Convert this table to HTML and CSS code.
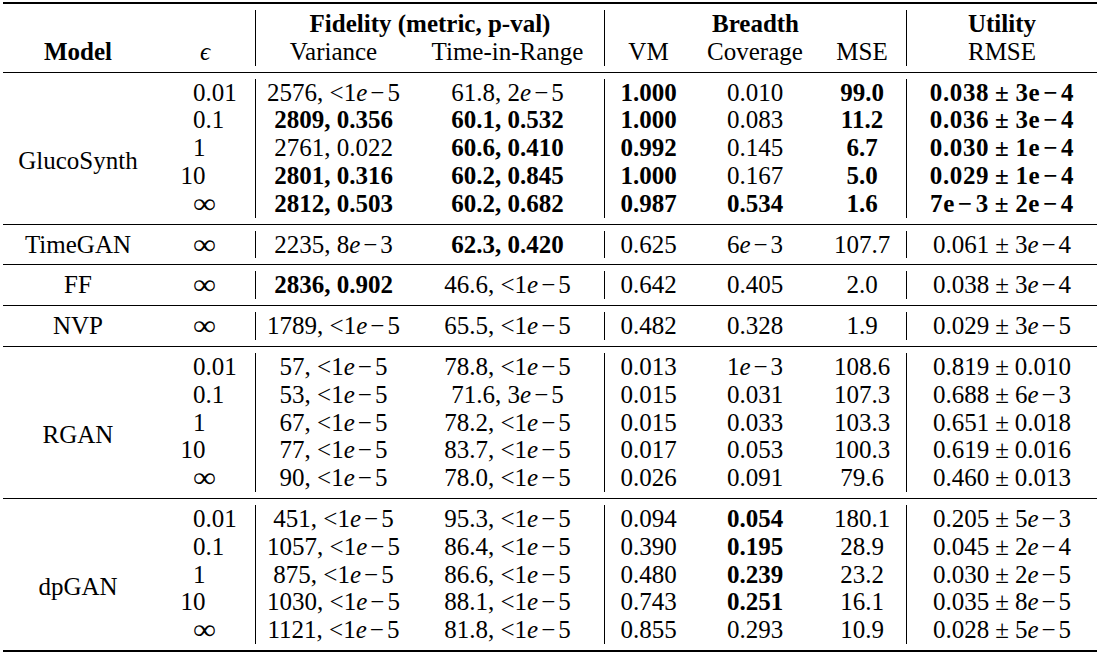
FILE: index.html
```html
<!DOCTYPE html>
<html>
<head>
<meta charset="utf-8">
<link rel="stylesheet" href="styles.css">
</head>
<body>
<div class="table">
  <div class="grp head">
    <div></div><div></div>
    <div class="c vl b span2">Fidelity (metric, p-val)</div>
    <div class="c vl b span3">Breadth</div>
    <div class="c vl b">Utility</div>
    <div class="c b">Model</div>
    <div class="eps-h"><span class="mi">ϵ</span></div>
    <div class="c vl">Variance</div>
    <div class="c">Time-in-Range</div>
    <div class="c vl">VM</div>
    <div class="c">Coverage</div>
    <div class="c">MSE</div>
    <div class="c vl">RMSE</div>
  </div>

  <div class="grp">
    <div class="c label">GlucoSynth</div>
    <div class="eps">0.01</div><div class="c vl">2576, &lt;1<span class="mi">e</span><span class="bin">−</span>5</div><div class="c">61.8, 2<span class="mi">e</span><span class="bin">−</span>5</div><div class="c vl b">1.000</div><div class="c">0.010</div><div class="c b">99.0</div><div class="c vl b mb">0.038<span class="pm">±</span>3e<span class="bin">−</span>4</div>
    <div class="eps">0.1</div><div class="c vl b">2809, 0.356</div><div class="c b">60.1, 0.532</div><div class="c vl b">1.000</div><div class="c">0.083</div><div class="c b">11.2</div><div class="c vl b mb">0.036<span class="pm">±</span>3e<span class="bin">−</span>4</div>
    <div class="eps">1</div><div class="c vl">2761, 0.022</div><div class="c b">60.6, 0.410</div><div class="c vl b">0.992</div><div class="c">0.145</div><div class="c b">6.7</div><div class="c vl b mb">0.030<span class="pm">±</span>1e<span class="bin">−</span>4</div>
    <div class="eps"><span class="out">10</span></div><div class="c vl b">2801, 0.316</div><div class="c b">60.2, 0.845</div><div class="c vl b">1.000</div><div class="c">0.167</div><div class="c b">5.0</div><div class="c vl b mb">0.029<span class="pm">±</span>1e<span class="bin">−</span>4</div>
    <div class="eps"><span class="inf">∞</span></div><div class="c vl b">2812, 0.503</div><div class="c b">60.2, 0.682</div><div class="c vl b">0.987</div><div class="c b">0.534</div><div class="c b">1.6</div><div class="c vl b mb">7e<span class="bin">−</span>3<span class="pm">±</span>2e<span class="bin">−</span>4</div>
  </div>

  <div class="grp">
    <div class="c">TimeGAN</div>
    <div class="eps"><span class="inf">∞</span></div><div class="c vl">2235, 8<span class="mi">e</span><span class="bin">−</span>3</div><div class="c b">62.3, 0.420</div><div class="c vl">0.625</div><div class="c">6<span class="mi">e</span><span class="bin">−</span>3</div><div class="c">107.7</div><div class="c vl">0.061<span class="pm">±</span>3<span class="mi">e</span><span class="bin">−</span>4</div>
  </div>

  <div class="grp">
    <div class="c">FF</div>
    <div class="eps"><span class="inf">∞</span></div><div class="c vl b">2836, 0.902</div><div class="c">46.6, &lt;1<span class="mi">e</span><span class="bin">−</span>5</div><div class="c vl">0.642</div><div class="c">0.405</div><div class="c">2.0</div><div class="c vl">0.038<span class="pm">±</span>3<span class="mi">e</span><span class="bin">−</span>4</div>
  </div>

  <div class="grp">
    <div class="c">NVP</div>
    <div class="eps"><span class="inf">∞</span></div><div class="c vl">1789, &lt;1<span class="mi">e</span><span class="bin">−</span>5</div><div class="c">65.5, &lt;1<span class="mi">e</span><span class="bin">−</span>5</div><div class="c vl">0.482</div><div class="c">0.328</div><div class="c">1.9</div><div class="c vl">0.029<span class="pm">±</span>3<span class="mi">e</span><span class="bin">−</span>5</div>
  </div>

  <div class="grp">
    <div class="c label">RGAN</div>
    <div class="eps">0.01</div><div class="c vl">57, &lt;1<span class="mi">e</span><span class="bin">−</span>5</div><div class="c">78.8, &lt;1<span class="mi">e</span><span class="bin">−</span>5</div><div class="c vl">0.013</div><div class="c">1<span class="mi">e</span><span class="bin">−</span>3</div><div class="c">108.6</div><div class="c vl">0.819<span class="pm">±</span>0.010</div>
    <div class="eps">0.1</div><div class="c vl">53, &lt;1<span class="mi">e</span><span class="bin">−</span>5</div><div class="c">71.6, 3<span class="mi">e</span><span class="bin">−</span>5</div><div class="c vl">0.015</div><div class="c">0.031</div><div class="c">107.3</div><div class="c vl">0.688<span class="pm">±</span>6<span class="mi">e</span><span class="bin">−</span>3</div>
    <div class="eps">1</div><div class="c vl">67, &lt;1<span class="mi">e</span><span class="bin">−</span>5</div><div class="c">78.2, &lt;1<span class="mi">e</span><span class="bin">−</span>5</div><div class="c vl">0.015</div><div class="c">0.033</div><div class="c">103.3</div><div class="c vl">0.651<span class="pm">±</span>0.018</div>
    <div class="eps"><span class="out">10</span></div><div class="c vl">77, &lt;1<span class="mi">e</span><span class="bin">−</span>5</div><div class="c">83.7, &lt;1<span class="mi">e</span><span class="bin">−</span>5</div><div class="c vl">0.017</div><div class="c">0.053</div><div class="c">100.3</div><div class="c vl">0.619<span class="pm">±</span>0.016</div>
    <div class="eps"><span class="inf">∞</span></div><div class="c vl">90, &lt;1<span class="mi">e</span><span class="bin">−</span>5</div><div class="c">78.0, &lt;1<span class="mi">e</span><span class="bin">−</span>5</div><div class="c vl">0.026</div><div class="c">0.091</div><div class="c">79.6</div><div class="c vl">0.460<span class="pm">±</span>0.013</div>
  </div>

  <div class="grp">
    <div class="c label">dpGAN</div>
    <div class="eps">0.01</div><div class="c vl">451, &lt;1<span class="mi">e</span><span class="bin">−</span>5</div><div class="c">95.3, &lt;1<span class="mi">e</span><span class="bin">−</span>5</div><div class="c vl">0.094</div><div class="c b">0.054</div><div class="c">180.1</div><div class="c vl">0.205<span class="pm">±</span>5<span class="mi">e</span><span class="bin">−</span>3</div>
    <div class="eps">0.1</div><div class="c vl">1057, &lt;1<span class="mi">e</span><span class="bin">−</span>5</div><div class="c">86.4, &lt;1<span class="mi">e</span><span class="bin">−</span>5</div><div class="c vl">0.390</div><div class="c b">0.195</div><div class="c">28.9</div><div class="c vl">0.045<span class="pm">±</span>2<span class="mi">e</span><span class="bin">−</span>4</div>
    <div class="eps">1</div><div class="c vl">875, &lt;1<span class="mi">e</span><span class="bin">−</span>5</div><div class="c">86.6, &lt;1<span class="mi">e</span><span class="bin">−</span>5</div><div class="c vl">0.480</div><div class="c b">0.239</div><div class="c">23.2</div><div class="c vl">0.030<span class="pm">±</span>2<span class="mi">e</span><span class="bin">−</span>5</div>
    <div class="eps"><span class="out">10</span></div><div class="c vl">1030, &lt;1<span class="mi">e</span><span class="bin">−</span>5</div><div class="c">88.1, &lt;1<span class="mi">e</span><span class="bin">−</span>5</div><div class="c vl">0.743</div><div class="c b">0.251</div><div class="c">16.1</div><div class="c vl">0.035<span class="pm">±</span>8<span class="mi">e</span><span class="bin">−</span>5</div>
    <div class="eps"><span class="inf">∞</span></div><div class="c vl">1121, &lt;1<span class="mi">e</span><span class="bin">−</span>5</div><div class="c">81.8, &lt;1<span class="mi">e</span><span class="bin">−</span>5</div><div class="c vl">0.855</div><div class="c">0.293</div><div class="c">10.9</div><div class="c vl">0.028<span class="pm">±</span>5<span class="mi">e</span><span class="bin">−</span>5</div>
  </div>
</div>
</body>
</html>
```

FILE: styles.css
```css
html, body {
  margin: 0;
  padding: 0;
  background: #ffffff;
}

body {
  font-family: "Liberation Serif", "Times New Roman", "DejaVu Serif", serif;
  font-size: 25px;
  color: #000000;
}

.table {
  margin: 2px 0 0 3px;
  width: 1094px;
  border-top: 2px solid #000;
  border-bottom: 2px solid #000;
}

.grp {
  display: grid;
  grid-template-columns: 150px 102px 156px 193px 88px 126px 88px 191px;
  grid-auto-rows: 27.8px;
  line-height: 27.8px;
  padding: 6px 0;
  border-bottom: 1px solid #000;
}

.grp:last-child {
  border-bottom: none;
}

.c {
  text-align: center;
  white-space: nowrap;
}

.b {
  font-weight: bold;
}

.vl {
  border-left: 1px solid #000;
}

.span2 {
  grid-column: span 2;
}

.span3 {
  grid-column: span 3;
}

.label {
  grid-column: 1;
  grid-row: 1 / span 5;
  align-self: center;
  padding-top: 25px;
}

.eps {
  padding-left: 40px;
  white-space: nowrap;
}

.eps-h {
  padding-left: 47px;
}

.out {
  margin-left: -12.5px;
}

.inf {
  display: inline-block;
  font-weight: normal;
  transform: scale(1.3, 1.15);
  transform-origin: left center;
}

.mi {
  font-style: italic;
}

.bin {
  margin: 0 3px;
}

.pm {
  margin: 0 6px;
}

.mb {
  letter-spacing: 0.6px;
}
```
